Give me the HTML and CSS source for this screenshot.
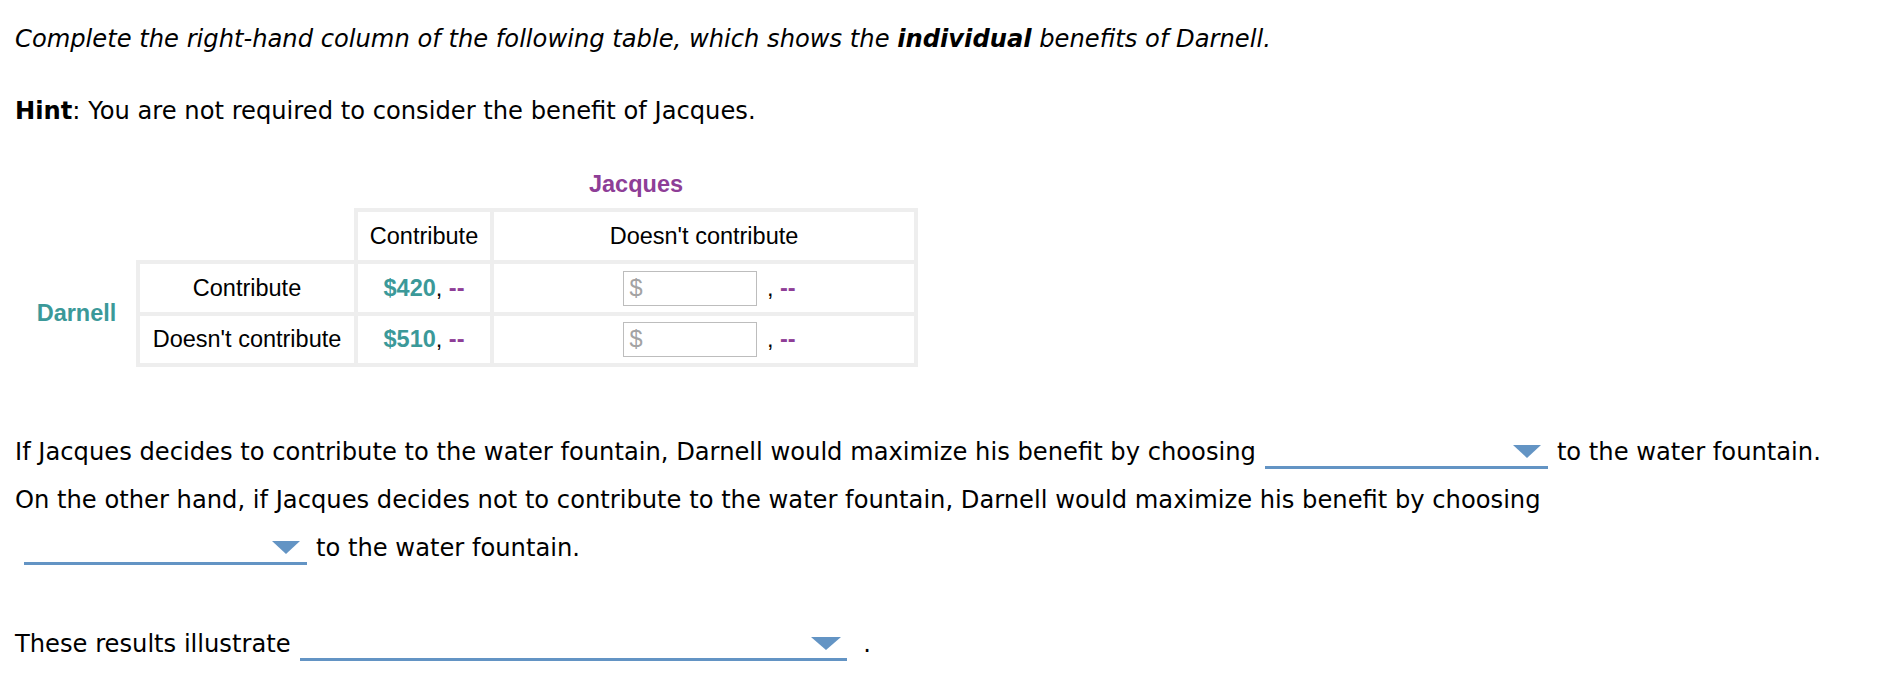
FILE: index.html
```html
<!DOCTYPE html>
<html lang="en">
<head>
<meta charset="utf-8">
<title>Public good game</title>
<link rel="stylesheet" href="styles.css">
</head>
<body>
<div class="page">
  <p class="intro"><em>Complete the right-hand column of the following table, which shows the <strong>individual</strong> benefits of Darnell.</em></p>
  <p class="hint"><strong>Hint</strong>: You are not required to consider the benefit of Jacques.</p>

  <div class="game">
    <div class="jacques">Jacques</div>
    <div class="cell head c3">Contribute</div>
    <div class="cell head c4">Doesn't contribute</div>
    <div class="darnell">Darnell</div>

    <div class="cell r1 c2">Contribute</div>
    <div class="cell r1 c3"><span class="pay"><span class="teal">$420</span>, <span class="purple">--</span></span></div>
    <div class="cell r1 c4"><span class="field"><input class="money" type="text" placeholder="$"> , <span class="purple">--</span></span></div>

    <div class="cell r2 c2">Doesn't contribute</div>
    <div class="cell r2 c3"><span class="pay"><span class="teal">$510</span>, <span class="purple">--</span></span></div>
    <div class="cell r2 c4"><span class="field"><input class="money" type="text" placeholder="$"> , <span class="purple">--</span></span></div>
  </div>

  <p class="para">If Jacques decides to contribute to the water fountain, Darnell would maximize his benefit by choosing<span class="select short"><span class="select-inner"><svg width="28" height="13" viewBox="0 0 28 13"><path d="M0 0H28L14 13Z" fill="#6394c4"/></svg></span></span>to the water fountain.<br>On the other hand, if Jacques decides not to contribute to the water fountain, Darnell would maximize his benefit by choosing<br><span class="select short first"><span class="select-inner"><svg width="28" height="13" viewBox="0 0 28 13"><path d="M0 0H28L14 13Z" fill="#6394c4"/></svg></span></span>to the water fountain.</p>

  <p class="last">These results illustrate<span class="select long"><span class="select-inner"><svg width="30" height="13" viewBox="0 0 30 13"><path d="M0 0H30L15 13Z" fill="#6394c4"/></svg></span></span> .</p>
</div>
</body>
</html>
```

FILE: styles.css
```css
html, body {
  margin: 0;
  background: #ffffff;
}

body {
  font-family: "DejaVu Sans", Verdana, sans-serif;
  font-size: 24.2px;
  color: #000000;
}

.page {
  padding: 24px 15px 0;
}

.intro {
  margin: 0;
  line-height: 31px;
}

.hint {
  margin: 41px 0 0;
  line-height: 31px;
}

.game {
  margin-top: 43px;
  display: grid;
  grid-template-columns: 123px 218px 136px 424px;
  grid-template-rows: 40px 52px 52px 51px;
  font-family: "Liberation Sans", Arial, sans-serif;
  font-size: 23.5px;
}

.jacques {
  grid-column: 3 / 5;
  grid-row: 1;
  text-align: center;
  font-weight: bold;
  color: #8e3e97;
  line-height: 28px;
  padding-bottom: 12px;
}

.darnell {
  grid-column: 1;
  grid-row: 3 / 5;
  display: flex;
  align-items: center;
  justify-content: center;
  font-weight: bold;
  color: #3b9999;
}

.cell {
  display: flex;
  align-items: center;
  justify-content: center;
  border: 2px solid #eeeeee;
  box-shadow: 0 0 0 2px #eeeeee;
  white-space: nowrap;
}

.head { grid-row: 2; }
.r1 { grid-row: 3; }
.r2 { grid-row: 4; }
.c2 { grid-column: 2; }
.c3 { grid-column: 3; }
.c4 { grid-column: 4; }

.field {
  padding-left: 11px;
}

.teal {
  color: #3b9999;
  font-weight: bold;
}

.purple {
  color: #8e3e97;
  font-weight: bold;
}

.money {
  box-sizing: border-box;
  width: 134px;
  height: 35px;
  margin: 0 3px 0 0;
  padding: 0 5px;
  border: 1px solid #bdbdbd;
  border-radius: 0;
  font-family: "Liberation Sans", Arial, sans-serif;
  font-size: 23.5px;
  color: #000000;
  background: #ffffff;
  vertical-align: baseline;
}

.money::placeholder {
  color: #a3a3a3;
}

.para {
  margin: 63px 0 0;
  line-height: 48px;
}

.last {
  margin: 48px 0 0;
  line-height: 48px;
}

.select {
  display: inline-block;
  overflow: hidden;
  vertical-align: -9px;
  height: 30px;
  border-bottom: 3px solid #6394c4;
  margin: 0 9px 0 9px;
}

.select.short {
  width: 283px;
}

.select.long {
  width: 547px;
}

.select-inner {
  display: flex;
  height: 100%;
  justify-content: flex-end;
  align-items: center;
  padding-right: 7px;
}

.select.long .select-inner {
  padding-right: 6px;
}
```
